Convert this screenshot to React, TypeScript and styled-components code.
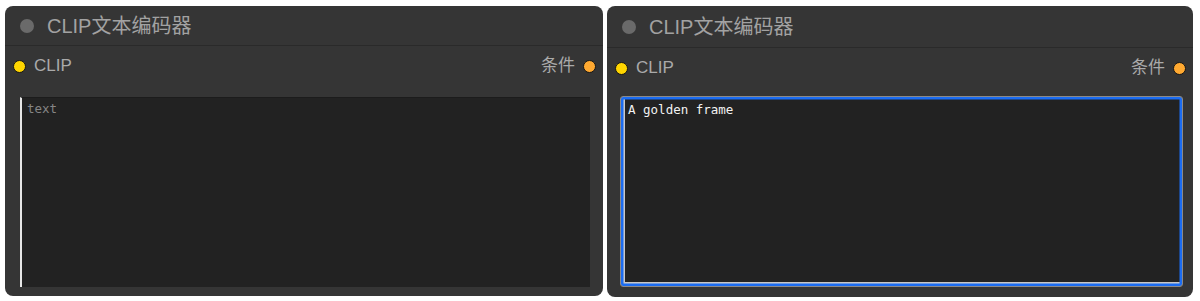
import * as React from 'react';
import styled, { createGlobalStyle } from 'styled-components';

const GlobalStyle = createGlobalStyle`
    html, body {
        margin: 0;
        background: #ffffff;
    }
    body {
        font-family: "Liberation Sans", "Noto Sans CJK SC", sans-serif;
    }`;

const Stage = styled.div`
    display: flex;
    align-items: flex-start;
    gap: 4px;
    padding: 6px 0 0 5px;
    height: 301px;
    box-sizing: border-box;
    overflow: hidden;`;

const Node = styled.div<{ $width: number; $height: number }>`
    width: ${p => p.$width}px;
    height: ${p => p.$height}px;
    background: #353535;
    border-radius: 8px;
    display: flex;
    flex-direction: column;
    box-sizing: border-box;`;

const Header = styled.div<{ $height: number }>`
    height: ${p => p.$height}px;
    display: flex;
    align-items: center;
    gap: 13px;
    padding-left: 15px;
    border-bottom: 1px solid #2a2a2a;
    flex-shrink: 0;`;

const StatusDot = styled.span`
    width: 14px;
    height: 14px;
    border-radius: 50%;
    background: #6a6a6a;`;

const Title = styled.span`
    font-size: 20px;
    line-height: 24px;
    color: #a2a2a2;`;

const SlotRow = styled.div<{ $height: number }>`
    height: ${p => p.$height}px;
    display: flex;
    align-items: center;
    justify-content: space-between;
    padding: 0 7px 0 8px;
    flex-shrink: 0;`;

const Slot = styled.div`
    display: flex;
    align-items: center;
    gap: 8px;`;

const SlotDot = styled.span<{ $color: string }>`
    width: 13px;
    height: 13px;
    border-radius: 50%;
    background: ${p => p.$color};
    border: 1.5px solid #151515;
    box-sizing: border-box;`;

const SlotLabel = styled.span`
    display: block;
    font-size: 17px;
    line-height: 20px;
    height: 20px;
    color: #aaaaaa;`;

const Prompt = styled.textarea<{ $focused?: boolean; $margin: string }>`
    flex: 1;
    margin: ${p => p.$margin};
    background: #222222;
    color: #f2f2f2;
    font-family: "DejaVu Sans Mono", "Liberation Mono", monospace;
    font-size: 12.5px;
    line-height: 15px;
    padding: 3px 5px;
    resize: none;
    box-sizing: border-box;
    border: none;
    border-left: 2px solid #e6e6e6;
    border-top: 1px solid #1c1c1c;
    outline: none;
    caret-color: #bbbbbb;

    &::placeholder {
        color: #858585;
    }

    ${p => p.$focused && `
        border: 1px solid #8a8a8a;
        border-radius: 3px;
        box-shadow: inset 0 0 0 2.5px #1b6cf2, inset 1px -1px 0 3px #c8c8c8;
        padding: 5px 7px;
    `}`;

function FocusedPrompt() {
    const ref = React.useRef<HTMLTextAreaElement>(null);

    React.useEffect(() => {
        const el = ref.current;
        if (el) {
            el.focus();
            el.setSelectionRange(el.value.length, el.value.length);
        }
    }, []);

    return (
        <Prompt
            ref={ref}
            $focused
            $margin="8px 10px 10px 13px"
            defaultValue={'A golden frame\n'}
            spellCheck={false}/>
    );
}

function ClipNode(props: { width: number; height: number; header: number; row: number; children: React.ReactNode }) {
    return (
        <Node $width={props.width} $height={props.height}>
            <Header $height={props.header}>
                <StatusDot/>
                <Title>CLIP文本编码器</Title>
            </Header>
            <SlotRow $height={props.row}>
                <Slot>
                    <SlotDot $color="#ffd500"/>
                    <SlotLabel>CLIP</SlotLabel>
                </Slot>
                <Slot>
                    <SlotLabel>条件</SlotLabel>
                    <SlotDot $color="#ffa931"/>
                </Slot>
            </SlotRow>
            {props.children}
        </Node>
    );
}

export default function App() {
    return (
        <>
            <GlobalStyle/>
            <Stage>
                <ClipNode width={598} height={290} header={39} row={40}>
                    <Prompt $margin="11px 13px 9px 15px" placeholder="text" spellCheck={false}/>
                </ClipNode>
                <ClipNode width={586} height={291} header={41} row={40}>
                    <FocusedPrompt/>
                </ClipNode>
            </Stage>
        </>
    );
}
